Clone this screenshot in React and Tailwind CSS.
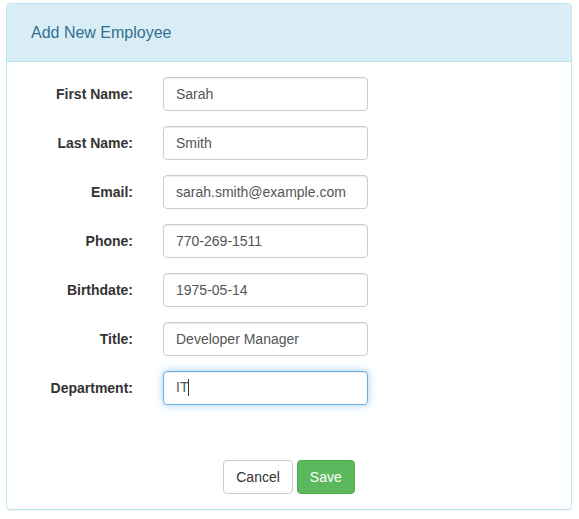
const fields = [
  { label: "First Name:", value: "Sarah" },
  { label: "Last Name:", value: "Smith" },
  { label: "Email:", value: "sarah.smith@example.com" },
  { label: "Phone:", value: "770-269-1511" },
  { label: "Birthdate:", value: "1975-05-14" },
  { label: "Title:", value: "Developer Manager" },
];

const inputCls =
  "w-[205px] h-[34px] px-3 rounded border border-[#ccc] text-[14px] text-[#555] bg-white shadow-[inset_0_1px_1px_rgba(0,0,0,0.075)] outline-none";

const Row = ({ label, children }) => (
  <div className="flex items-center mb-[15px]">
    <label className="w-[126px] mt-[2px] text-right font-bold text-[14px] text-[#333]">
      {label}
    </label>
    <div className="ml-[30px]">{children}</div>
  </div>
);

export default function App() {
  return (
    <div
      className="pt-[3px] pl-[6px] pr-[7px] bg-white min-h-[519px]"
      style={{ fontFamily: '"Liberation Sans", Arial, sans-serif' }}
    >
      <div className="border border-[#bce8f1] rounded shadow-[0_1px_1px_rgba(0,0,0,0.05)] h-[507px] flex flex-col bg-white">
        <div className="bg-[#d9edf7] border-b border-[#bce8f1] rounded-t px-6 pt-5 pb-[19px]">
          <h3 className="text-[16px] leading-[1.1] text-[#31708f]">
            Add New Employee
          </h3>
        </div>
        <div className="pt-[15px] flex-1 flex flex-col">
          {fields.map((f) => (
            <Row key={f.label} label={f.label}>
              <input className={inputCls} defaultValue={f.value} readOnly />
            </Row>
          ))}
          <Row label="Department:">
            <div className="w-[205px] h-[34px] px-3 rounded border border-[#66afe9] text-[14px] text-[#555] bg-white shadow-[inset_0_1px_1px_rgba(0,0,0,0.075),0_0_8px_rgba(102,175,233,0.6)] flex items-center">
              IT
              <span className="inline-block w-px h-[17px] bg-[#333]" />
            </div>
          </Row>
          <div className="mt-auto mb-[15px] flex justify-center gap-1">
            <button className="h-[34px] px-3 rounded border border-[#ccc] bg-white text-[14px] text-[#333]">
              Cancel
            </button>
            <button className="h-[34px] px-3 rounded border border-[#4cae4c] bg-[#5cb85c] text-[14px] text-white">
              Save
            </button>
          </div>
        </div>
      </div>
    </div>
  );
}
